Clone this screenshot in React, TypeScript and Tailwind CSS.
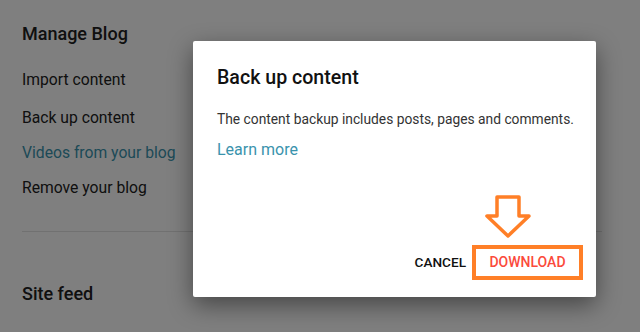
const font = { fontFamily: "Roboto, 'Liberation Sans', sans-serif" }

function SettingsPage() {
  return (
    <div className="h-[332px] w-[640px] bg-white px-[22px] text-[#212121]" style={font}>
      <h2 className="pt-[22px] text-[18px] leading-[24px] font-medium">Manage Blog</h2>
      <ul className="mt-[23px] text-[15.7px] leading-[22px]">
        <li className="h-[38px]">Import content</li>
        <li className="h-[35px]">Back up content</li>
        <li className="h-[35px] text-[#3a94ae]">Videos from your blog</li>
        <li>Remove your blog</li>
      </ul>
      <div className="mt-[32px] h-px w-[580px] bg-[#e2e2e2]" />
      <h2 className="mt-[50px] text-[18px] leading-[24px] font-medium">Site feed</h2>
    </div>
  )
}

function DownArrow() {
  return (
    <svg
      className="absolute left-[13px] -top-[50px]"
      width="46"
      height="44"
      viewBox="0 0 46 44"
    >
      <path
        d="M12 2 H34 V21 H44 L23 41 L2 21 H12 Z"
        fill="white"
        stroke="#ff7f27"
        strokeWidth="3.5"
        strokeLinejoin="round"
      />
    </svg>
  )
}

function BackupDialog() {
  return (
    <div className="flex h-[256px] w-[403px] flex-col rounded-[2px] bg-white pb-[17px] pl-6 pr-[13px] pt-[23px] shadow-[0_8px_24px_rgba(0,0,0,0.45)]" style={font}>
      <h1 className="text-[19.6px] leading-[28px] font-medium text-[#111]">Back up content</h1>
      <p className="mt-[17px] text-[13.8px] leading-[20px] text-[#333]">
        The content backup includes posts, pages and comments.
      </p>
      <a className="mt-[9px] text-[16px] leading-[24px] text-[#3a93ad]">Learn more</a>
      <div className="mt-auto flex items-center justify-end">
        <button className="mr-[2px] px-[4px] text-[13.6px] font-medium text-[#111]">CANCEL</button>
        <div className="relative">
          <DownArrow />
          <button className="flex h-[35px] w-[111px] items-center justify-center border-4 border-[#ff7f27] text-[14px] font-medium text-[#fb4a3c]">
            DOWNLOAD
          </button>
        </div>
      </div>
    </div>
  )
}

export default function App() {
  return (
    <div className="relative h-[332px] w-[640px] overflow-hidden">
      <SettingsPage />
      <div className="absolute inset-0 bg-black/50 pl-[193px] pt-[41px]">
        <BackupDialog />
      </div>
    </div>
  )
}
